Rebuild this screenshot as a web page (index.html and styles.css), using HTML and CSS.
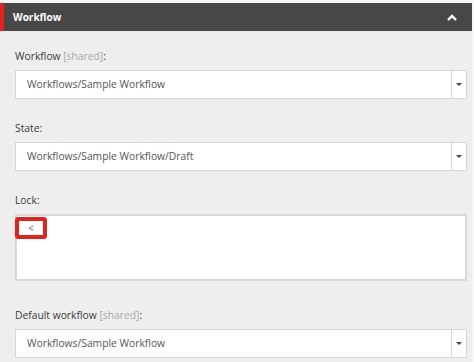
FILE: index.html
```html
<!DOCTYPE html>
<html lang="en">
<head>
    <meta charset="UTF-8">
    <title>Workflow</title>
    <link rel="stylesheet" href="styles.css">
</head>
<body>
    <section class="panel">
        <header class="panel-head">
            <h2>Workflow</h2>
            <svg class="chevron" width="10" height="7" viewBox="0 0 10 7">
                <path d="M1 6 L5 2 L9 6" fill="none" stroke="#fff" stroke-width="2.4"/>
            </svg>
        </header>

        <div class="panel-body">
            <div class="field">
                <label>Workflow <span class="shared">[shared]</span>:</label>
                <div class="select">
                    <span class="value">Workflows/Sample Workflow</span>
                    <span class="arrow"></span>
                </div>
            </div>

            <div class="field">
                <label>State:</label>
                <div class="select">
                    <span class="value">Workflows/Sample Workflow/Draft</span>
                    <span class="arrow"></span>
                </div>
            </div>

            <div class="field lock">
                <label>Lock:</label>
                <div class="textbox">
                    <span class="marker">&lt;</span>
                </div>
            </div>

            <div class="field">
                <label>Default workflow <span class="shared">[shared]</span>:</label>
                <div class="select">
                    <span class="value">Workflows/Sample Workflow</span>
                    <span class="arrow"></span>
                </div>
            </div>
        </div>
    </section>
</body>
</html>
```

FILE: styles.css
```css
body {
    margin: 0;
    padding-top: 3px;
    background-color: #f6f6f6;
    font-family: "Open Sans", "Liberation Sans", sans-serif;
    font-size: 10.3px;
    color: #333;
    overflow: hidden;
}

.panel {
    width: 472px;
    background-color: #eeeeee;
    height: calc(100vh - 3px);
    overflow: hidden;
}

.panel-head {
    height: 28px;
    background-color: #474747;
    border-left: 4px solid #e4221b;
    display: flex;
    align-items: center;
    justify-content: space-between;
    padding: 0 15px 0 9px;
}

.panel-head h2 {
    margin: 0;
    font-size: 10px;
    font-weight: bold;
    color: #fff;
}

.chevron {
    display: block;
}

.panel-body {
    padding: 17px 5px 0 15px;
}

.field {
    margin-bottom: 21px;
}

.field.lock {
    margin-bottom: 26px;
}

label {
    display: block;
    line-height: 16px;
    margin-bottom: 6px;
    color: #3a3a3a;
}

.shared {
    color: #a8a8a8;
}

.select {
    height: 27px;
    display: flex;
    background-color: #fff;
    border: 1px solid #d6d6d6;
}

.select .value {
    flex: 1;
    line-height: 27px;
    padding-left: 11px;
    color: #555;
}

.select .arrow {
    width: 14px;
    border-left: 1px solid #d6d6d6;
    position: relative;
}

.select .arrow::after {
    content: "";
    position: absolute;
    left: 4px;
    top: 12px;
    border-left: 3px solid transparent;
    border-right: 3px solid transparent;
    border-top: 3px solid #444;
}

.textbox {
    height: 63px;
    background-color: #fff;
    border: 2px solid #d8d8d8;
    position: relative;
}

.marker {
    position: absolute;
    left: -2px;
    top: 1px;
    width: 24px;
    height: 14px;
    border: 4px solid #e4221b;
    border-radius: 3px;
    background-color: #fff;
    color: #666;
    font-size: 10px;
    line-height: 14px;
    text-align: center;
}
```
